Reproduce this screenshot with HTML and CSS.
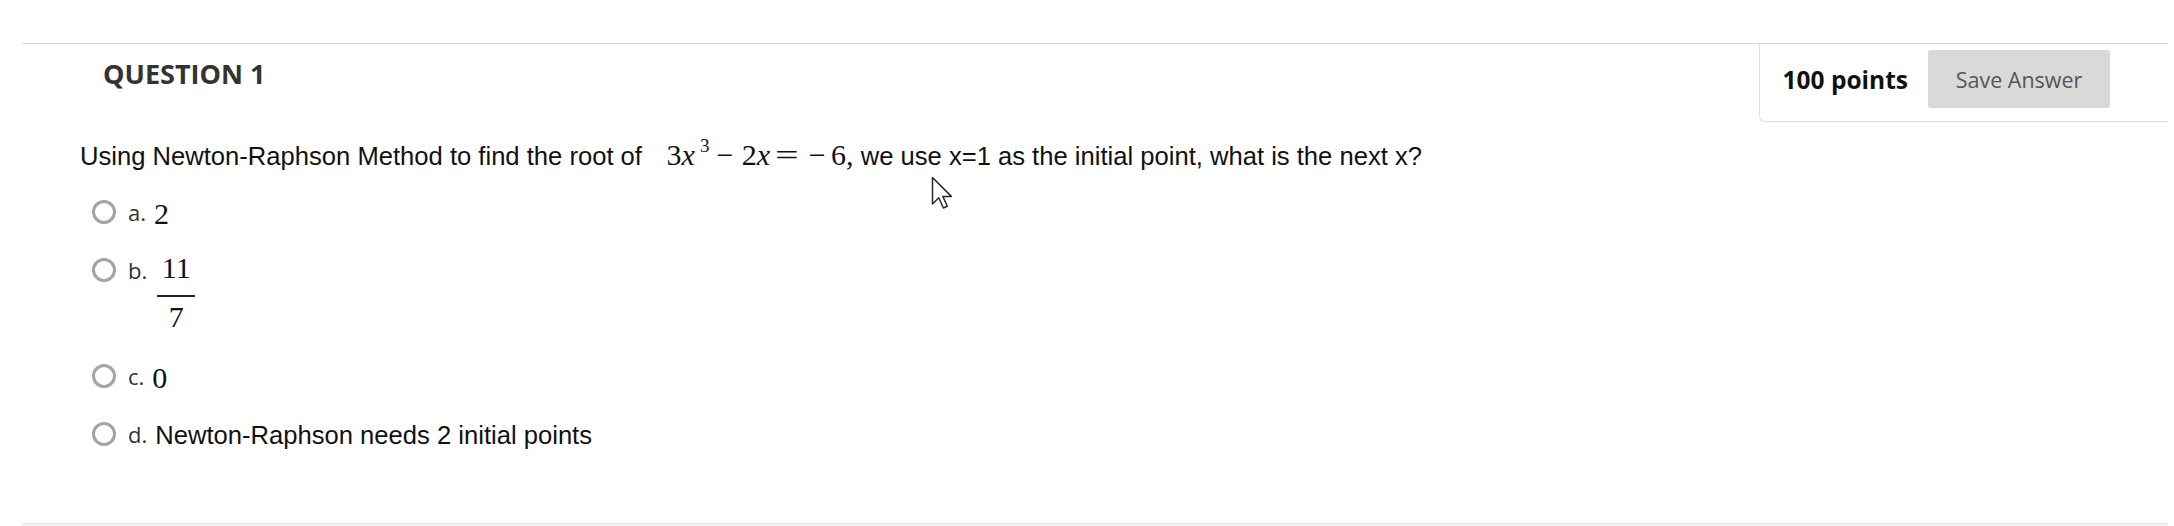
FILE: index.html
```html
<!DOCTYPE html>
<html lang="en">
<head>
<meta charset="utf-8">
<title>Question 1</title>
<link rel="stylesheet" href="styles.css">
</head>
<body>
<div class="question">
  <div class="q-header">
    <h2 class="q-title">QUESTION 1</h2>
    <div class="q-meta">
      <span class="points">100 points</span>
      <button class="save-btn" type="button">Save Answer</button>
    </div>
  </div>
  <p class="q-text">Using Newton-Raphson Method to find the root of <span class="math"><span>3</span><i>x</i><sup class="sup">3</sup><span class="op">−</span><span class="num2">2</span><i>x</i><span class="rel">=</span><span class="op2">−</span><span class="six">6</span>,</span> we use x=1 as the initial point, what is the next x?</p>
  <ul class="options">
    <li class="opt"><span class="radio"></span><span class="opt-body"><span class="opt-label">a.</span><span class="opt-val">2</span></span></li>
    <li class="opt"><span class="radio"></span><span class="opt-body"><span class="opt-label">b.</span></span><span class="frac"><span class="frac-num">11</span><span class="frac-bar"></span><span class="frac-den">7</span></span></li>
    <li class="opt"><span class="radio"></span><span class="opt-body"><span class="opt-label">c.</span><span class="opt-val">0</span></span></li>
    <li class="opt"><span class="radio"></span><span class="opt-body"><span class="opt-label">d.</span><span class="opt-text">Newton-Raphson needs 2 initial points</span></span></li>
  </ul>
</div>
<div class="next-question"></div>
<svg class="cursor" width="23" height="35" viewBox="0 0 23 35" aria-hidden="true">
  <path d="M1.5 1.5 L1.5 28 L7.8 21.8 L12.4 32 L16.3 30.3 L11.8 20.4 L20.3 20.4 Z" fill="#fff" stroke="#2a2a2a" stroke-width="1.5" stroke-linejoin="round"/>
</svg>
</body>
</html>
```

FILE: styles.css
```css
html, body {
  margin: 0;
  padding: 0;
  background: #ffffff;
}

body {
  position: relative;
  height: 526px;
  overflow: hidden;
  font-family: "Liberation Sans", Arial, sans-serif;
}

.question {
  margin: 43px 6px 0 22px;
  border-top: 1px solid #dadada;
}

.q-header {
  display: flex;
  justify-content: space-between;
  align-items: flex-start;
}

.q-title {
  margin: 0;
  padding: 11px 0 0 81px;
  font-family: "Open Sans", sans-serif;
  font-weight: 700;
  font-size: 27px;
  line-height: 37px;
  color: #333333;
}

.q-meta {
  display: flex;
  align-items: center;
  gap: 20px;
  padding: 6px 58px 13px 23px;
  border-left: 1px solid #dedede;
  border-bottom: 1px solid #dedede;
  border-bottom-left-radius: 6px;
}

.points {
  font-family: "Open Sans", sans-serif;
  font-weight: 700;
  font-size: 24.5px;
  color: #111111;
}

.save-btn {
  width: 182px;
  height: 58px;
  border: none;
  border-radius: 3px;
  background: #d9d9d9;
  font-family: "Open Sans", sans-serif;
  font-size: 21.5px;
  color: #555555;
  padding: 0;
}

.q-text {
  margin: 18px 0 0;
  padding-left: 58px;
  font-size: 25.6px;
  line-height: 32px;
  color: #111111;
}

.math {
  font-family: "Liberation Serif", "Times New Roman", serif;
  font-size: 30px;
  line-height: 0.9;
  margin-left: 17.5px;
}

.math i {
  font-style: italic;
}

.sup {
  font-size: 19px;
  line-height: 0;
  vertical-align: 13px;
  margin-left: 5px;
}

.op {
  margin-left: 7px;
}

.num2 {
  margin-left: 8.5px;
}

.rel {
  display: inline-block;
  width: 24px;
  margin-left: 5px;
  transform: scaleX(1.4);
  transform-origin: left center;
}

.op2 {
  display: inline-block;
  margin-left: 9.5px;
}

.six {
  margin-left: 5.5px;
}

.options {
  list-style: none;
  margin: 23px 0 0;
  padding: 0 0 0 70px;
  display: flex;
  flex-direction: column;
  gap: 23.5px;
}

.opt {
  display: flex;
  align-items: flex-start;
  min-height: 34px;
}

.radio {
  box-sizing: border-box;
  width: 24px;
  height: 24px;
  margin-top: 5px;
  margin-right: 12px;
  border: 3px solid #a3a3a3;
  border-radius: 50%;
  flex: none;
}

.opt-body {
  font-family: "Open Sans", sans-serif;
  font-size: 22px;
  line-height: 34px;
  height: 34px;
}

.opt-label {
  color: #333333;
  margin-right: 8px;
}

.opt-val {
  font-family: "Liberation Serif", "Times New Roman", serif;
  font-size: 30px;
  line-height: 1;
  vertical-align: -3px;
  color: #111111;
}

.opt-text {
  font-family: "Liberation Sans", Arial, sans-serif;
  font-size: 25.6px;
  color: #111111;
  line-height: 1;
  vertical-align: -1px;
}

.frac {
  display: flex;
  flex-direction: column;
  align-items: center;
  width: 38px;
  margin-left: 2px;
  font-family: "Liberation Serif", "Times New Roman", serif;
  font-size: 30px;
  color: #111111;
}

.frac-num {
  line-height: 30px;
}

.frac-bar {
  align-self: stretch;
  height: 2px;
  background: #222222;
  margin: 12px 0 1px;
}

.frac-den {
  line-height: 38px;
}

.next-question {
  margin: 72px 6px 0 22px;
  height: 12px;
  border-top: 1px solid #e6e6e6;
  background: linear-gradient(#f1f1f1, #ffffff);
}

.cursor {
  position: absolute;
  left: 931px;
  top: 176px;
}
```
